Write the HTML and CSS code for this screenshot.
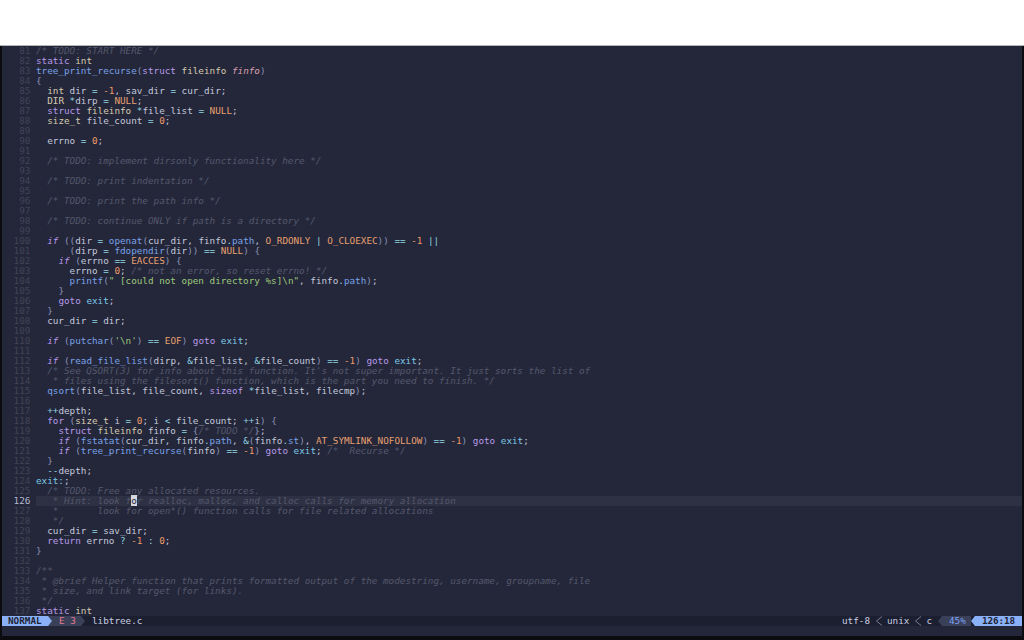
FILE: index.html
```html
<!DOCTYPE html>
<html lang="en">
<head>
<meta charset="utf-8">
<title>libtree.c</title>
<link rel="stylesheet" href="styles.css">
</head>
<body>
<div class="topbar"></div>
<main class="window">
<div class="editor">
<div class="ln"><span class="g">81</span><span class="c">/* TODO: START HERE */</span></div>
<div class="ln"><span class="g">82</span><span class="k">static</span> <span class="t">int</span></div>
<div class="ln"><span class="g">83</span><span class="f">tree_print_recurse</span><span class="b">(</span><span class="k">struct</span> <span class="t">fileinfo</span> <span class="p">finfo</span><span class="b">)</span></div>
<div class="ln"><span class="g">84</span><span class="b">{</span></div>
<div class="ln"><span class="g">85</span>  <span class="t">int</span> dir <span class="o">=</span> <span class="n">-1</span>, sav_dir <span class="o">=</span> cur_dir;</div>
<div class="ln"><span class="g">86</span>  <span class="t">DIR</span> <span class="o">*</span>dirp <span class="o">=</span> <span class="m">NULL</span>;</div>
<div class="ln"><span class="g">87</span>  <span class="k">struct</span> <span class="t">fileinfo</span> <span class="o">*</span>file_list <span class="o">=</span> <span class="m">NULL</span>;</div>
<div class="ln"><span class="g">88</span>  <span class="t">size_t</span> file_count <span class="o">=</span> <span class="n">0</span>;</div>
<div class="ln"><span class="g">89</span></div>
<div class="ln"><span class="g">90</span>  errno <span class="o">=</span> <span class="n">0</span>;</div>
<div class="ln"><span class="g">91</span></div>
<div class="ln"><span class="g">92</span>  <span class="c">/* TODO: implement dirsonly functionality here */</span></div>
<div class="ln"><span class="g">93</span></div>
<div class="ln"><span class="g">94</span>  <span class="c">/* TODO: print indentation */</span></div>
<div class="ln"><span class="g">95</span></div>
<div class="ln"><span class="g">96</span>  <span class="c">/* TODO: print the path info */</span></div>
<div class="ln"><span class="g">97</span></div>
<div class="ln"><span class="g">98</span>  <span class="c">/* TODO: continue ONLY if path is a directory */</span></div>
<div class="ln"><span class="g">99</span></div>
<div class="ln"><span class="g">100</span>  <span class="i">if</span> <span class="b">((</span>dir <span class="o">=</span> <span class="f">openat</span><span class="b">(</span>cur_dir, finfo<span class="o">.</span><span class="f">path</span>, <span class="m">O_RDONLY</span> <span class="o">|</span> <span class="m">O_CLOEXEC</span><span class="b">))</span> <span class="o">==</span> <span class="n">-1</span> <span class="o">||</span></div>
<div class="ln"><span class="g">101</span>      <span class="b">(</span>dirp <span class="o">=</span> <span class="f">fdopendir</span><span class="b">(</span>dir<span class="b">))</span> <span class="o">==</span> <span class="m">NULL</span><span class="b">)</span> <span class="b">{</span></div>
<div class="ln"><span class="g">102</span>    <span class="i">if</span> <span class="b">(</span>errno <span class="o">==</span> <span class="m">EACCES</span><span class="b">)</span> <span class="b">{</span></div>
<div class="ln"><span class="g">103</span>      errno <span class="o">=</span> <span class="n">0</span>; <span class="c">/* not an error, so reset errno! */</span></div>
<div class="ln"><span class="g">104</span>      <span class="f">printf</span><span class="b">(</span><span class="s">" [could not open directory %s]\n"</span>, finfo<span class="o">.</span><span class="f">path</span><span class="b">)</span>;</div>
<div class="ln"><span class="g">105</span>    <span class="b">}</span></div>
<div class="ln"><span class="g">106</span>    <span class="k">goto</span> <span class="l">exit</span>;</div>
<div class="ln"><span class="g">107</span>  <span class="b">}</span></div>
<div class="ln"><span class="g">108</span>  cur_dir <span class="o">=</span> dir;</div>
<div class="ln"><span class="g">109</span></div>
<div class="ln"><span class="g">110</span>  <span class="i">if</span> <span class="b">(</span><span class="f">putchar</span><span class="b">(</span><span class="s">'\n'</span><span class="b">)</span> <span class="o">==</span> <span class="m">EOF</span><span class="b">)</span> <span class="k">goto</span> <span class="l">exit</span>;</div>
<div class="ln"><span class="g">111</span></div>
<div class="ln"><span class="g">112</span>  <span class="i">if</span> <span class="b">(</span><span class="f">read_file_list</span><span class="b">(</span>dirp, <span class="o">&amp;</span>file_list, <span class="o">&amp;</span>file_count<span class="b">)</span> <span class="o">==</span> <span class="n">-1</span><span class="b">)</span> <span class="k">goto</span> <span class="l">exit</span>;</div>
<div class="ln"><span class="g">113</span>  <span class="c">/* See QSORT(3) for info about this function. It's not super important. It just sorts the list of</span></div>
<div class="ln"><span class="g">114</span>   <span class="c">* files using the filesort() function, which is the part you need to finish. */</span></div>
<div class="ln"><span class="g">115</span>  <span class="f">qsort</span><span class="b">(</span>file_list, file_count, <span class="k">sizeof</span> <span class="o">*</span>file_list, filecmp<span class="b">)</span>;</div>
<div class="ln"><span class="g">116</span></div>
<div class="ln"><span class="g">117</span>  <span class="o">++</span>depth;</div>
<div class="ln"><span class="g">118</span>  <span class="k">for</span> <span class="b">(</span><span class="t">size_t</span> i <span class="o">=</span> <span class="n">0</span>; i <span class="o">&lt;</span> file_count; <span class="o">++</span>i<span class="b">)</span> <span class="b">{</span></div>
<div class="ln"><span class="g">119</span>    <span class="k">struct</span> <span class="t">fileinfo</span> finfo <span class="o">=</span> <span class="b">{</span><span class="c">/* TODO */</span><span class="b">}</span>;</div>
<div class="ln"><span class="g">120</span>    <span class="i">if</span> <span class="b">(</span><span class="f">fstatat</span><span class="b">(</span>cur_dir, finfo<span class="o">.</span><span class="f">path</span>, <span class="o">&amp;</span><span class="b">(</span>finfo<span class="o">.</span><span class="f">st</span><span class="b">)</span>, <span class="m">AT_SYMLINK_NOFOLLOW</span><span class="b">)</span> <span class="o">==</span> <span class="n">-1</span><span class="b">)</span> <span class="k">goto</span> <span class="l">exit</span>;</div>
<div class="ln"><span class="g">121</span>    <span class="i">if</span> <span class="b">(</span><span class="f">tree_print_recurse</span><span class="b">(</span>finfo<span class="b">)</span> <span class="o">==</span> <span class="n">-1</span><span class="b">)</span> <span class="k">goto</span> <span class="l">exit</span>; <span class="c">/*  Recurse */</span></div>
<div class="ln"><span class="g">122</span>  <span class="b">}</span></div>
<div class="ln"><span class="g">123</span>  <span class="o">--</span>depth;</div>
<div class="ln"><span class="g">124</span><span class="l">exit:</span>;</div>
<div class="ln"><span class="g">125</span>  <span class="c">/* TODO: Free any allocated resources.</span></div>
<div class="ln cur"><span class="g">126</span>   <span class="c">* Hint: look f<span class="cursor">o</span>r realloc, malloc, and calloc calls for memory allocation</span></div>
<div class="ln"><span class="g">127</span>   <span class="c">*       look for open*() function calls for file related allocations</span></div>
<div class="ln"><span class="g">128</span>   <span class="c">*/</span></div>
<div class="ln"><span class="g">129</span>  cur_dir <span class="o">=</span> sav_dir;</div>
<div class="ln"><span class="g">130</span>  <span class="k">return</span> errno <span class="o">?</span> <span class="n">-1</span> <span class="o">:</span> <span class="n">0</span>;</div>
<div class="ln"><span class="g">131</span><span class="b">}</span></div>
<div class="ln"><span class="g">132</span></div>
<div class="ln"><span class="g">133</span><span class="c">/**</span></div>
<div class="ln"><span class="g">134</span> <span class="c">* @brief Helper function that prints formatted output of the modestring, username, groupname, file</span></div>
<div class="ln"><span class="g">135</span> <span class="c">* size, and link target (for links).</span></div>
<div class="ln"><span class="g">136</span> <span class="c">*/</span></div>
<div class="ln"><span class="g">137</span><span class="k">static</span> <span class="t">int</span></div>
</div>
<footer class="status">
<div class="mode">NORMAL</div>
<div class="diag">E 3</div>
<div class="file">libtree.c</div>
<div class="right">
<span class="enc">utf-8</span>
<svg class="sep" viewBox="0 0 8 10" aria-hidden="true"><path d="M7 0.5 1.5 5 7 9.5"/></svg>
<span class="enc">unix</span>
<svg class="sep" viewBox="0 0 8 10" aria-hidden="true"><path d="M7 0.5 1.5 5 7 9.5"/></svg>
<span class="enc">c</span>
<div class="pct">45%</div>
<div class="pos">126:18</div>
</div>
</footer>
<div class="cmd"></div>
</main>
</body>
</html>
```

FILE: styles.css
```css
html, body {
  margin: 0;
  height: 100%;
  background: #fff;
  overflow: hidden;
}
body {
  display: flex;
  flex-direction: column;
  height: 640px;
}
.topbar {
  flex: none;
  height: 46px;
  background: #fff;
  border-bottom: 1px solid #b5b5b5;
  box-sizing: border-box;
}
.window {
  flex: 1;
  display: flex;
  flex-direction: column;
  background: #24273a;
  border: solid #0c0c10;
  border-width: 0 2px 4px 2px;
  font-family: "DejaVu Sans Mono", monospace;
  font-size: 9.3px;
  line-height: 10px;
  color: #c3c8da;
  overflow: hidden;
  min-height: 0;
}
.editor {
  flex: none;
  height: 570px;
  overflow: hidden;
}
.ln {
  height: 10px;
  white-space: pre;
}
.g {
  display: inline-block;
  width: 28.4px;
  margin-right: 5.6px;
  text-align: right;
  color: #414456;
}
.cur {
  background: linear-gradient(to right, transparent 34px, #2e3144 34px);
}
.cur .g { color: #b4bad0; }
.cursor {
  background: #d5d7df;
  color: #24283b;
  font-style: normal;
}
.c { color: #54586c; font-style: italic; }
.k { color: #b79ae8; }
.i { color: #b79ae8; font-style: italic; }
.t { color: #d6cbb0; }
.f { color: #7aa2e7; }
.p { color: #dba0b0; font-style: italic; }
.b { color: #8a93b8; }
.o { color: #8fd3e0; }
.n { color: #ef9a68; }
.m { color: #e8a070; }
.s { color: #9ec87a; }
.l { color: #7dc8e8; }
.status {
  height: 10px;
  flex: none;
  display: flex;
  align-items: center;
  background: #1c1f30;
  color: #c8cde0;
}
.mode {
  flex: none;
  width: 50px;
  height: 10px;
  padding-left: 6px;
  box-sizing: border-box;
  background: #8ab0f7;
  color: #1f2335;
  font-weight: bold;
  clip-path: polygon(0 0, 46px 0, 50px 5px, 46px 10px, 0 10px);
  position: relative;
  z-index: 1;
  margin-right: -4px;
}
.diag {
  flex: none;
  width: 37px;
  height: 10px;
  padding-left: 11px;
  box-sizing: border-box;
  background: #3b4059;
  color: #e8788e;
  clip-path: polygon(0 0, 33px 0, 37px 5px, 33px 10px, 0 10px);
}
.file { margin-left: 7px; }
.right {
  margin-left: auto;
  display: flex;
  align-items: center;
}
.sep {
  width: 8px;
  height: 10px;
  margin: 0 4.5px;
  fill: none;
  stroke: #8c92ab;
  stroke-width: 0.8;
}
.pct {
  flex: none;
  width: 33px;
  height: 10px;
  margin-left: 6px;
  padding-left: 11px;
  box-sizing: border-box;
  background: #3b4059;
  color: #7aa2f7;
  clip-path: polygon(4px 0, 100% 0, 100% 100%, 4px 100%, 0 5px);
}
.pos {
  flex: none;
  width: 51px;
  height: 10px;
  padding-left: 11px;
  box-sizing: border-box;
  background: #8ab0f7;
  color: #1f2335;
  font-weight: bold;
  letter-spacing: -0.1px;
  clip-path: polygon(4px 0, 100% 0, 100% 100%, 4px 100%, 0 5px);
}
.cmd {
  flex: 1;
  background: #24273a;
}
```
